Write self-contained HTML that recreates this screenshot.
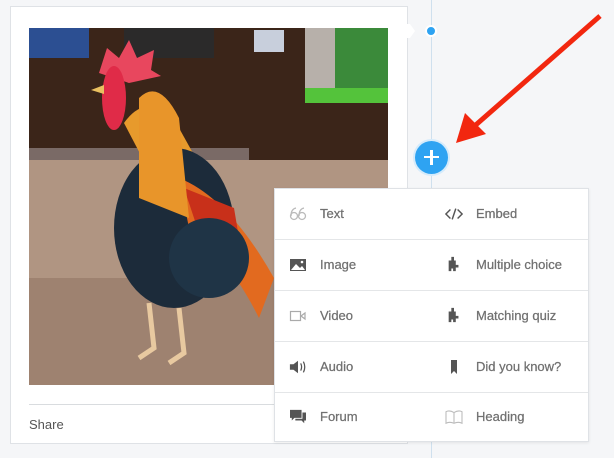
<!DOCTYPE html>
<html><head><style>
*{margin:0;padding:0;box-sizing:border-box}
body{width:614px;height:458px;background:#f5f6f8;font-family:"Liberation Sans",sans-serif;position:relative;overflow:hidden}
.card{position:absolute;left:10px;top:6px;width:398px;height:438px;background:#fff;border:1px solid #dfe2e6}
.photo{position:absolute;left:29px;top:28px;width:359px;height:357px}
.div{position:absolute;left:29px;top:404px;width:360px;height:1px;background:#d9dcdf}
.share{position:absolute;left:29px;top:417px;font-size:13px;color:#555}
.vline{position:absolute;left:431px;top:0;width:1px;height:458px;background:#cfe0ee}
.dot{position:absolute;left:425px;top:25px;width:12px;height:12px;border-radius:50%;background:#2ea3f2;border:2px solid #fff}
.plus{position:absolute;left:415px;top:141px;width:33px;height:33px;border-radius:50%;background:#2ea3f2;box-shadow:0 0 0 2px #d5ebfb}
.plus:before{content:"";position:absolute;left:9px;top:15px;width:15px;height:2.4px;background:#fff}
.plus:after{content:"";position:absolute;left:15.3px;top:9px;width:2.4px;height:15px;background:#fff}
.notch{position:absolute;left:405px;top:24px;width:10px;height:14px;background:#fff;clip-path:polygon(0 0,50% 0,100% 50%,50% 100%,0 100%)}
.menu{position:absolute;left:274px;top:188px;width:315px;height:254px;background:#fff;border:1px solid #dfe2e6;box-shadow:0 1px 3px rgba(0,0,0,.08)}
.row{position:absolute;left:0;width:313px;height:51px;border-bottom:1px solid #e4e6e8}
.it{position:absolute;top:0;height:50px;line-height:50px;font-size:13px;color:#707070;-webkit-text-stroke:0.25px #707070}
.ic{position:absolute;top:17px;width:18px;height:16px}
</style></head><body>
<div class="card"></div>
<div class="notch"></div>
<svg class="photo" viewBox="0 0 359 357" preserveAspectRatio="none">
<rect width="359" height="357" fill="#a88e7c"/>
<rect width="359" height="150" fill="#3b2519"/>
<rect x="0" y="0" width="60" height="30" fill="#2c4f92"/>
<rect x="95" y="0" width="90" height="30" fill="#2b2a2a"/>
<rect x="225" y="2" width="30" height="22" fill="#c8cfdc"/>
<rect x="276" y="0" width="83" height="75" fill="#3b8a3a"/>
<rect x="276" y="0" width="30" height="60" fill="#b7b0aa"/>
<rect x="276" y="60" width="83" height="15" fill="#54c33b"/>
<rect x="0" y="120" width="220" height="12" fill="#7a6a66"/>
<rect x="0" y="132" width="359" height="225" fill="#b09582"/>
<rect x="0" y="250" width="359" height="107" fill="#9e8270"/>
<path d="M95 95 Q120 60 150 100 L200 190 L150 200 Z" fill="#e79a2c"/>
<ellipse cx="145" cy="200" rx="60" ry="80" fill="#1c2b3a"/>
<path d="M150 150 Q200 170 245 250 L230 290 Q200 230 160 200 Z" fill="#e26a1f"/>
<path d="M155 160 L205 180 L210 210 L170 205 Z" fill="#c8301a"/>
<path d="M110 70 Q130 50 150 90 L160 190 L110 170 Z" fill="#e8952a"/>
<ellipse cx="180" cy="230" rx="40" ry="40" fill="#1f3446"/>
<path d="M70 45 L78 20 L90 30 L100 12 L108 30 L125 22 L122 42 L132 48 L100 55 Z" fill="#e8475e"/>
<ellipse cx="85" cy="70" rx="12" ry="32" fill="#e02b48"/>
<path d="M62 62 L75 57 L75 66 Z" fill="#e9c060"/>
<path d="M120 275 L125 320 L110 330 M150 280 L155 325 L140 335" stroke="#e8c9a0" stroke-width="5" fill="none"/>
</svg>
<div class="div"></div>
<div class="share">Share</div>
<div class="vline"></div>
<div class="dot"></div>
<div class="plus"></div>
<svg style="position:absolute;left:450px;top:10px" width="160" height="140"><line x1="150" y1="6" x2="20" y2="120" stroke="#f2270f" stroke-width="5"/><polygon points="6,133 15,103 36,124" fill="#f2270f"/></svg>
<div class="menu">
<div class="row" style="top:0"></div><div class="row" style="top:51px"></div><div class="row" style="top:102px"></div><div class="row" style="top:153px"></div>

<div class="it" style="left:45px;top:0">Text</div>
<div class="it" style="left:201px;top:0">Embed</div>
<div class="it" style="left:45px;top:51px">Image</div>
<div class="it" style="left:201px;top:51px">Multiple choice</div>
<div class="it" style="left:45px;top:102px">Video</div>
<div class="it" style="left:201px;top:102px">Matching quiz</div>
<div class="it" style="left:45px;top:153px">Audio</div>
<div class="it" style="left:201px;top:153px">Did you know?</div>
<div class="it" style="left:45px;top:203px">Forum</div>
<div class="it" style="left:201px;top:203px">Heading</div>

<svg class="ic" style="left:14px;top:17px" viewBox="0 0 18 16"><g fill="none" stroke="#bbb" stroke-width="1.3"><circle cx="5" cy="10" r="3.5"/><path d="M2 10 Q2 3 7 2"/><circle cx="13" cy="10" r="3.5"/><path d="M10 10 Q10 3 15 2"/></g></svg>
<svg class="ic" style="left:170px;top:17px" viewBox="0 0 20 16"><g fill="none" stroke="#555" stroke-width="1.6"><path d="M6 3 L1 8 L6 13 M14 3 L19 8 L14 13 M12 2 L8 14"/></g></svg>
<svg class="ic" style="left:14px;top:68px" viewBox="0 0 18 16"><rect x="1" y="2" width="16" height="12" fill="#555"/><path d="M2 13 L7 7 L11 11 L13 9 L16 13 Z" fill="#fff"/><circle cx="13" cy="5" r="1.3" fill="#fff"/></svg>
<svg class="ic" style="left:170px;top:67px" viewBox="0 0 18 18"><path d="M3 5 H6 V1 H9 V5 H11 V10 H14 V13 H11 V17 H8 V14 H6 V17 H3 Z" fill="#555"/></svg>
<svg class="ic" style="left:14px;top:119px" viewBox="0 0 18 16"><rect x="1.5" y="3.5" width="10" height="9" fill="none" stroke="#aaa" stroke-width="1.2"/><path d="M12 8 L16 5 V11 Z" fill="none" stroke="#aaa" stroke-width="1.2"/></svg>
<svg class="ic" style="left:170px;top:118px" viewBox="0 0 18 18"><path d="M3 5 H6 V1 H9 V5 H11 V10 H14 V13 H11 V17 H8 V14 H6 V17 H3 Z" fill="#555"/></svg>
<svg class="ic" style="left:14px;top:170px" viewBox="0 0 20 16"><path d="M1 5 H5 L10 1 V15 L5 11 H1 Z" fill="#555"/><path d="M13 4 Q15 8 13 12 M16 2 Q19 8 16 14" stroke="#555" stroke-width="1.4" fill="none"/></svg>
<svg class="ic" style="left:170px;top:170px" viewBox="0 0 18 16"><path d="M6 1 H12 V15 L9 12 L6 15 Z" fill="#555"/></svg>
<svg class="ic" style="left:14px;top:220px" viewBox="0 0 20 18"><path d="M1 1 H14 V10 H6 L3 13 V10 H1 Z" fill="#555"/><path d="M15 4 H19 V13 H17 V16 L14 13 H7 V11 H15 Z" fill="#555"/></svg>
<svg class="ic" style="left:170px;top:220px" viewBox="0 0 20 18"><path d="M1 3 Q5 1 10 4 Q15 1 19 3 V16 Q15 14 10 16 Q5 14 1 16 Z M10 4 V16" fill="none" stroke="#bbb" stroke-width="1.2"/></svg>
</div>
</body></html>
